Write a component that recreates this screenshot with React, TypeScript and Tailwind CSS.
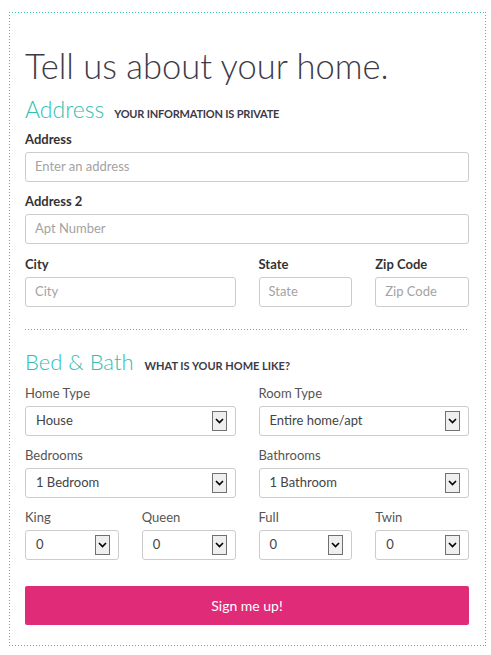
import React from "react";

const font = { fontFamily: "Lato, 'Open Sans', sans-serif" };

function Arrow() {
  return (
    <div className="w-[15px] h-[20px] bg-[#efefef] border border-[#707070] flex items-center justify-center">
      <svg width="9" height="6" viewBox="0 0 9 6">
        <path d="M1 1 L4.5 4.5 L8 1" fill="none" stroke="#000" strokeWidth="1.6" />
      </svg>
    </div>
  );
}

function Input({ placeholder }: { placeholder: string }) {
  return (
    <div className="h-[30px] border border-[#cccccc] rounded-[3px] flex items-center pl-[9px] text-[13px] text-[#a3a3a3]">
      {placeholder}
    </div>
  );
}

function Select({ value }: { value: string }) {
  return (
    <div className="h-[30px] border border-[#cccccc] rounded-[3px] flex items-center justify-between pl-[10px] pr-[8px] text-[13px] text-[#444]">
      <span>{value}</span>
      <Arrow />
    </div>
  );
}

function BoldLabel({ children }: { children: React.ReactNode }) {
  return <div className="text-[13px] font-bold text-[#333] leading-[16px] mb-[5px]">{children}</div>;
}

function Label({ children }: { children: React.ReactNode }) {
  return <div className="text-[13px] text-[#555] leading-[16px] mb-[5px]">{children}</div>;
}

export default function App() {
  return (
    <div className="bg-white w-[491px] h-[655px] pt-[12px] pl-[9px]" style={font}>
      <div className="w-[477px] h-[634px] p-px [background-image:linear-gradient(to_right,#2fc6b7_1px,transparent_1px),linear-gradient(to_right,#2fc6b7_1px,transparent_1px),linear-gradient(to_bottom,#2fc6b7_1px,transparent_1px),linear-gradient(to_bottom,#2fc6b7_1px,transparent_1px)] [background-size:3px_1px,3px_1px,1px_3px,1px_3px] [background-position:0_0,0_100%,0_0,100%_0] [background-repeat:repeat-x,repeat-x,repeat-y,repeat-y]">
        <div className="pl-[15px] pr-[16px] pt-[33px]">
          <h1 className="text-[34.5px] leading-[40px] text-[#3d3a48] font-light">
            Tell us about your home.
          </h1>
          <div className="flex items-baseline mt-[9px]">
            <span className="text-[23px] text-[#30c0b2] leading-[28px] font-light">Address</span>
            <span className="ml-[10px] text-[11px] font-bold text-[#3d3a48] uppercase tracking-[-0.2px]">
              Your information is private
            </span>
          </div>
          <div className="mt-[8px]">
            <BoldLabel>Address</BoldLabel>
            <Input placeholder="Enter an address" />
          </div>
          <div className="mt-[11px]">
            <BoldLabel>Address 2</BoldLabel>
            <Input placeholder="Apt Number" />
          </div>
          <div className="grid grid-cols-4 gap-x-[23px] mt-[12px]">
            <div className="col-span-2">
              <BoldLabel>City</BoldLabel>
              <Input placeholder="City" />
            </div>
            <div>
              <BoldLabel>State</BoldLabel>
              <Input placeholder="State" />
            </div>
            <div>
              <BoldLabel>Zip Code</BoldLabel>
              <Input placeholder="Zip Code" />
            </div>
          </div>
          <div className="h-px mt-[22px] bg-[linear-gradient(to_right,#2fc6b7_1px,transparent_1px)] bg-[length:3px_1px] bg-repeat-x" />
          <div className="flex items-baseline mt-[18px]">
            <span className="text-[22px] text-[#30c0b2] leading-[28px] font-light">Bed &amp; Bath</span>
            <span className="ml-[11px] text-[11px] font-bold text-[#3d3a48] uppercase">
              What is your home like?
            </span>
          </div>
          <div className="grid grid-cols-4 gap-x-[23px] gap-y-[11px] mt-[9px]">
            <div className="col-span-2">
              <Label>Home Type</Label>
              <Select value="House" />
            </div>
            <div className="col-span-2">
              <Label>Room Type</Label>
              <Select value="Entire home/apt" />
            </div>
            <div className="col-span-2">
              <Label>Bedrooms</Label>
              <Select value="1 Bedroom" />
            </div>
            <div className="col-span-2">
              <Label>Bathrooms</Label>
              <Select value="1 Bathroom" />
            </div>
            <div>
              <Label>King</Label>
              <Select value="0" />
            </div>
            <div>
              <Label>Queen</Label>
              <Select value="0" />
            </div>
            <div>
              <Label>Full</Label>
              <Select value="0" />
            </div>
            <div>
              <Label>Twin</Label>
              <Select value="0" />
            </div>
          </div>
          <button className="mt-[26px] w-full h-[39px] bg-[#e02b79] text-white text-[14px] rounded-[2px]">
            Sign me up!
          </button>
        </div>
      </div>
    </div>
  );
}
